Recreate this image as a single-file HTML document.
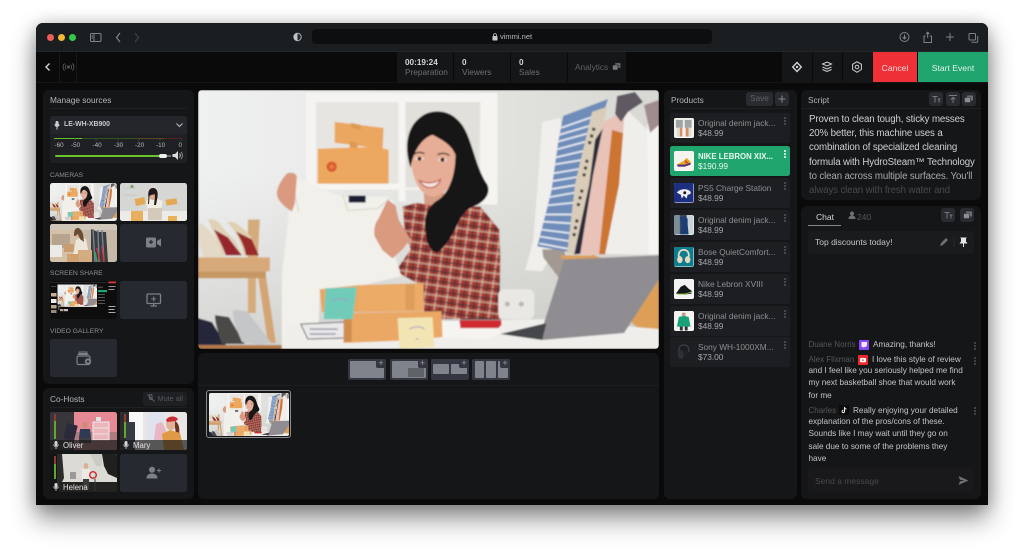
<!DOCTYPE html>
<html><head><meta charset="utf-8">
<style>
html,body{margin:0;padding:0;width:1024px;height:555px;overflow:hidden;background:#fff;font-family:"Liberation Sans",sans-serif}
#wrap{position:absolute;left:0;top:0;width:1024px;height:555px;overflow:hidden;filter:blur(.35px)}
.a,.t{position:absolute}
.t{white-space:nowrap;line-height:12px}
.win{position:absolute;left:36px;top:23px;width:952px;height:482px;background:#0a0a0b;border-radius:7px 7px 0 0;box-shadow:0 14px 26px rgba(0,0,0,.42),0 2px 18px rgba(0,0,0,.25)}
.p{position:absolute;background:#151618;border-radius:6px}
.tile{position:absolute;width:67px;height:38px;border-radius:2.5px;background:#272930;overflow:hidden}
.tile svg{position:absolute;left:0;top:0;width:100%;height:100%}
.lb{position:absolute;font-size:6.7px;color:#8f9194;line-height:10px;white-space:nowrap}
.btn{position:absolute;background:#292b30;border-radius:3px;width:14px;height:14px}
.row{position:absolute;left:670px;width:120px;height:30px;background:#1d1e21;border-radius:2.5px}
.row .th{position:absolute;left:4px;top:5px;width:19.5px;height:19.5px;border-radius:2px;overflow:hidden;background:#fff}
.row .th svg{display:block;width:100%;height:100%}
.row .n{position:absolute;left:28px;top:4.5px;font-size:8.3px;line-height:11px;color:#8d8f92;white-space:nowrap}
.row .pr{position:absolute;left:28px;top:14.5px;font-size:8.3px;line-height:11px;color:#a3a5a8;white-space:nowrap}
.row .d{position:absolute;left:114px;top:4px;width:2px;height:2px;background:#55575b;box-shadow:0 3px 0 #55575b,0 6px 0 #55575b;border-radius:50%}
.cell{position:absolute;top:52px;height:30px;background:#151617}
.v{position:absolute;left:8px;top:5px;font-size:8.2px;font-weight:bold;color:#d4d5d6;line-height:11px}
.s{position:absolute;left:8px;top:15px;font-size:8.3px;color:#6d6f72;line-height:11px;white-space:nowrap}
.sc{position:absolute;left:809px;font-size:9.7px;letter-spacing:-.12px;line-height:14px;color:#cfd0d1;white-space:nowrap}
.c{position:absolute;left:808.5px;font-size:8.2px;line-height:12px;color:#c4c5c6;white-space:nowrap}
.nm{color:#55575a;font-size:8px}
.dots{position:absolute;left:974px;width:2px;height:2px;background:#4f5157;box-shadow:0 3px 0 #4f5157,0 6px 0 #4f5157;border-radius:50%}
.lay{position:absolute;top:359px;height:21px;width:38px;background:#343741;border-radius:2px}
.in{position:absolute;background:#7f838c;border-radius:1px}
.pl{position:absolute;top:0;right:0;width:10px;height:9px;background:#343741;border-radius:0 2px 0 2px;color:#9a9da4;font-size:9px;line-height:9px;text-align:center}
.nametag{position:absolute;bottom:0;left:0;right:0;height:10px;background:rgba(25,25,25,.7)}
.h{font-size:8.3px;color:#b4b5b6}
</style></head><body><div id="wrap">

<div class="win"></div>
<!-- title bar -->
<div class="a" style="left:36px;top:23px;width:952px;height:29px;background:#1b1e21;border-radius:7px 7px 0 0;border-bottom:1px solid #23262a;box-sizing:border-box"></div>
<div class="a" style="left:47px;top:34px;width:7px;height:7px;border-radius:50%;background:#f25c58"></div>
<div class="a" style="left:58px;top:34px;width:7px;height:7px;border-radius:50%;background:#f7b731"></div>
<div class="a" style="left:69px;top:34px;width:7px;height:7px;border-radius:50%;background:#35c94a"></div>
<svg class="a" style="left:0;top:0" width="1024" height="90" fill="none" stroke="#7f8387" stroke-width="1">
 <rect x="90.5" y="33.5" width="10.5" height="8" rx="1"/><path d="M94 33.5v8M91.5 36h1.5M91.5 38h1.5"/>
 <path d="M120 33l-3.5 4.5 3.5 4.5" stroke-width="1.2"/><path d="M135 33l3.5 4.5-3.5 4.5" stroke="#3e4145" stroke-width="1.2"/>
 <circle cx="297.5" cy="37" r="3.7" fill="#23262a" stroke="#a8abae"/><path d="M297.5 33.3a3.7 3.7 0 0 0 0 7.4z" fill="#c2c4c6" stroke="none"/>
 <circle cx="904.5" cy="37" r="4.5"/><path d="M904.5 34.5v4M902.8 37l1.7 2 1.7-2"/>
 <path d="M925.5 36h-1.5v6.5h7.5V36H930M927.700 38v-5.500M926 34l1.700-1.800 1.700 1.800"/>
 <path d="M950 33v8M946 37h8"/>
 <rect x="969" y="33.5" width="6.5" height="6.5" rx="1"/><path d="M971.500 42.300h5.500a.7.7 0 0 0 .7-.7v-5.700"/>
 <path d="M708 34.500a2.700 2.700 0 1 0 .8 2" stroke="#a5a7aa"/><path d="M706.500 33.500l2 .5v2" stroke="#a5a7aa" stroke-width=".8"/>
</svg>
<div class="a" style="left:312px;top:29px;width:400px;height:15px;background:#0c0e10;border-radius:4px"></div>
<svg class="a" style="left:492px;top:33px" width="6" height="8"><rect x=".5" y="3" width="5" height="4.500" rx=".6" fill="#c8c9ca"/><path d="M1.600 3V2a1.400 1.400 0 0 1 2.800 0v1" stroke="#c8c9ca" stroke-width=".8" fill="none"/></svg>
<div class="t" style="left:500px;top:31px;font-size:7.5px;color:#b9babb">vimmi.net</div>

<!-- app bar -->
<div class="a" style="left:36px;top:52px;width:952px;height:30px;background:#0a0a0b"></div>
<div class="a" style="left:36px;top:81.500px;width:952px;height:1px;background:#141516"></div>
<div class="a" style="left:59px;top:52px;width:1px;height:30px;background:#161718"></div>
<div class="a" style="left:76px;top:52px;width:1px;height:30px;background:#161718"></div>
<svg class="a" style="left:43px;top:62px" width="10" height="10" fill="none"><path d="M6.500 1.500L3 5l3.500 3.500" stroke="#d5d6d7" stroke-width="1.400"/></svg>
<svg class="a" style="left:62px;top:61px" width="13" height="12" fill="none" stroke="#55575b" stroke-width=".9"><circle cx="6.500" cy="6" r="1" fill="#55575b"/><path d="M4.300 3.800a3 3 0 0 0 0 4.400M8.700 3.800a3 3 0 0 1 0 4.400M2.600 2.400a5 5 0 0 0 0 7.200M10.400 2.400a5 5 0 0 1 0 7.200"/></svg>

<div class="cell" style="left:397px;width:56px"><div class="v">00:19:24</div><div class="s">Preparation</div></div>
<div class="cell" style="left:454px;width:56px"><div class="v">0</div><div class="s">Viewers</div></div>
<div class="cell" style="left:511px;width:56px"><div class="v">0</div><div class="s">Sales</div></div>
<div class="cell" style="left:568px;width:58px"><div class="s" style="top:10px;left:7px;color:#5f6164">Analytics</div>
 <svg class="a" style="left:44px;top:10px" width="9" height="9"><rect x="3" y="1" width="5.500" height="5" rx=".8" fill="#5f6164"/><rect x=".5" y="3" width="5.500" height="5" rx=".8" fill="#77797c" stroke="#151617" stroke-width=".6"/></svg></div>

<div class="cell" style="left:782px;width:30px"></div><div class="cell" style="left:813px;width:29px"></div><div class="cell" style="left:843px;width:29px"></div>
<svg class="a" style="left:790px;top:59px" width="76" height="16" fill="none" stroke="#d0d1d2" stroke-width="1">
 <path d="M7 3.500L11.300 8 7 12.500 2.700 8z" stroke-width="1.400"/><circle cx="7" cy="8" r="1.200" fill="#d0d1d2" stroke="none"/>
 <path d="M37 3l4.500 2L37 7l-4.500-2zM32.500 8L37 10l4.500-2M32.500 10.500L37 12.500l4.500-2"/>
 <path d="M67 2.700l4.400 2.600v5.200L67 13.300l-4.400-2.800V5.300z"/><circle cx="67" cy="8" r="1.800"/>
</svg>
<div class="a" style="left:873px;top:52px;width:44px;height:30px;background:#f03037"></div>
<div class="a" style="left:918px;top:52px;width:70px;height:30px;background:#21a56e"></div>
<div class="t" style="left:873px;top:61.500px;width:44px;text-align:center;font-size:8.600px;color:#f6dadb">Cancel</div>
<div class="t" style="left:918px;top:61.500px;width:70px;text-align:center;font-size:8.600px;color:#dff2ea">Start Event</div>

<!-- left panel -->
<div class="p" style="left:43px;top:90px;width:151px;height:294px"></div>
<div class="t h" style="left:50px;top:94px">Manage sources</div>
<div class="a" style="left:50px;top:108px;width:137px;height:1px;background:#1f2023"></div>
<div class="a" style="left:50px;top:116px;width:137px;height:47px;background:#1e2024;border-radius:3px"></div>
<div class="a" style="left:50px;top:116px;width:137px;height:18px;background:#24262b;border-radius:3px 3px 0 0"></div>
<svg class="a" style="left:53px;top:120px" width="8" height="11"><rect x="2.500" y="1" width="3" height="5.500" rx="1.500" fill="#cfd0d1"/><path d="M1.500 4.500a2.500 2.500 0 0 0 5 0v-.2H1.500zM3.500 7v2.500h1V7z" fill="#cfd0d1"/></svg>
<div class="t" style="left:64px;top:119px;font-size:6.900px;font-weight:bold;color:#c8c9ca">LE-WH-XB900</div>
<svg class="a" style="left:175px;top:122px" width="9" height="6" fill="none"><path d="M1.500 1.500L4.500 4.500 7.500 1.500" stroke="#b9babb" stroke-width="1.100"/></svg>
<div class="a" style="left:54px;top:138px;width:28px;height:1px;background:#63c027"></div>
<div class="a" style="left:82px;top:138px;width:58px;height:1px;background:#34521d"></div>
<div class="a" style="left:140px;top:138px;width:24px;height:1px;background:#5a4a1c"></div>
<div class="a" style="left:164px;top:138px;width:18px;height:1px;background:#572023"></div>
<svg class="a" style="left:54px;top:138px" width="128" height="3"><path d="M0 0v3M21 0v3M42 0v3M64 0v3M85 0v3M106 0v3M128 0v3" stroke="#4d4f52" stroke-width=".6"/></svg>
<div class="t" style="left:54.500px;top:139.500px;font-size:6.300px;color:#b6b7b8">-60</div>
<div class="t" style="left:71px;top:139.500px;font-size:6.300px;color:#b6b7b8">-50</div>
<div class="t" style="left:92.500px;top:139.500px;font-size:6.300px;color:#b6b7b8">-40</div>
<div class="t" style="left:114px;top:139.500px;font-size:6.300px;color:#b6b7b8">-30</div>
<div class="t" style="left:135px;top:139.500px;font-size:6.300px;color:#b6b7b8">-20</div>
<div class="t" style="left:156px;top:139.500px;font-size:6.300px;color:#b6b7b8">-10</div>
<div class="t" style="left:178.500px;top:139.500px;font-size:6.300px;color:#b6b7b8">0</div>
<div class="a" style="left:55px;top:154.500px;width:110px;height:2px;background:#69c42b;border-radius:1px"></div>
<div class="a" style="left:165px;top:154.500px;width:6px;height:2px;background:#6a6c70"></div>
<div class="a" style="left:159px;top:153.500px;width:8px;height:4px;background:#f0f0f0;border-radius:2px"></div>
<svg class="a" style="left:172px;top:150px" width="12" height="11" fill="#dcdcdd"><path d="M.5 4h2.500l3-3v9l-3-3H.5z"/><path d="M7.500 3.500a3 3 0 0 1 0 4" stroke="#dcdcdd" fill="none" stroke-width=".9"/><path d="M9 2a5 5 0 0 1 0 7" stroke="#8e9092" fill="none" stroke-width=".9"/></svg>

<div class="lb" style="left:50px;top:170.500px">CAMERAS</div>
<div class="tile" style="left:50px;top:183px"><svg viewBox="0 0 462 260" preserveAspectRatio="xMidYMid slice"><use href="#scene"/></svg></div>
<div class="tile" style="left:120px;top:183px"><svg viewBox="0 0 67 38"><rect width="67" height="38" fill="#d6d7d4"/><rect x="0" y="28" width="67" height="10" fill="#ecebe7"/><path d="M3 5h14M3 12h14" stroke="#c2c3bf" stroke-width=".8"/><circle cx="12" cy="3.500" r="1.600" fill="#83a25f"/>
 <rect x="11" y="28" width="12" height="10" fill="#e6b05e"/><rect x="15" y="15" width="10" height="7" fill="#e3a955" transform="rotate(-12 20 18)"/><rect x="46" y="16" width="11" height="6" fill="#e3a955" transform="rotate(-8 51 19)"/>
 <path d="M26 18l6-2 5 0 6 2-3 13H28z" fill="#f1ece4"/><ellipse cx="33" cy="12" rx="4.200" ry="5" fill="#dfa78c"/><path d="M28.500 14c-1-7 2-9 4.500-9s5.500 2 4.500 9l-1.500 8h-2c.5-5 1.500-9 .5-11-2 1-4 .8-5 2l-.5 8h-1z" fill="#23191a"/><rect x="28" y="25" width="14" height="12" fill="#d3cabb"/><rect x="48" y="33" width="9" height="5" fill="#e8b15b"/></svg></div>
<div class="tile" style="left:50px;top:224px"><svg viewBox="0 0 67 38"><rect width="67" height="38" fill="#c6b9a8"/><rect x="0" y="0" width="28" height="38" fill="#d4c1a8"/><rect x="0" y="0" width="67" height="6" fill="#cfc7ba"/><rect x="2" y="10" width="18" height="14" fill="#b7a48e"/><rect x="0" y="21" width="12" height="12" fill="#eceae5"/><rect x="14" y="20" width="10" height="8" fill="#c89b70"/>
 <path d="M41 5l7 3 8 0 2 30H41z" fill="#3f3c3b"/><path d="M43 5l2 33M48 6l1 32M52 6l2 32" stroke="#6d86a0" stroke-width="1.400"/><path d="M47 24l3 14M52 22l2 16" stroke="#c93a4b" stroke-width="1.400"/><path d="M45 28l2 10" stroke="#2fa658" stroke-width="1.600"/>
 <path d="M26 16l5-3 5 2 3 16-2 7H22l2-12z" fill="#ece5d9"/><ellipse cx="27" cy="9" rx="3.200" ry="4" fill="#d9a78a"/><path d="M24 12c0-7 2-8 4-8s4 3 5 6l1 8-4-3-2-5-3 2z" fill="#6a4b33"/><rect x="28" y="26" width="14" height="12" fill="#d3ad81"/><rect x="17" y="30" width="12" height="8" fill="#cfa170"/></svg></div>
<div class="tile" style="left:120px;top:224px"></div>
<svg class="a" style="left:146px;top:236px" width="16" height="14"><rect x="0" y="1.500" width="10" height="10" rx="1.500" fill="#7d8086"/><path d="M11 5l4-2.500v8L11 8z" fill="#7d8086"/><path d="M5 4v4M3 6h4" stroke="#272930" stroke-width="1.200"/></svg>

<div class="lb" style="left:50px;top:269px">SCREEN SHARE</div>
<div class="tile" style="left:50px;top:281px;background:#0d0d0e"><svg viewBox="0 0 67 38"><rect width="67" height="38" fill="#0d0d0e"/><g transform="translate(7.500 3.500) scale(.0855)"><use href="#scene"/></g>
 <rect x="0" y="1" width="60" height=".8" fill="#2a2b2d"/><rect x="58.500" y=".5" width="7.500" height="1.800" fill="#e5343a"/><rect x="1" y="5" width="5" height=".8" fill="#555"/>
 <rect x="1" y="12" width="5.500" height="3.500" fill="#c9b090"/><rect x="1" y="18" width="5.500" height="4" fill="#ececec"/><rect x="1" y="24" width="5.500" height="3.500" fill="#b9a48c"/><rect x="1" y="29" width="5.500" height="3" fill="#9a8a82"/>
 <rect x="48" y="9" width="9" height="2.200" fill="#21a56e"/><rect x="48" y="5.500" width="5" height="1.600" fill="#444"/><rect x="48" y="13" width="7" height="1" fill="#555"/><rect x="48" y="16" width="7" height="1" fill="#555"/><rect x="48" y="19" width="7" height="1" fill="#555"/><rect x="48" y="22" width="7" height="1" fill="#555"/>
 <rect x="58.500" y="5" width="7" height="1" fill="#999"/><rect x="58.500" y="8" width="6" height="1" fill="#999"/><rect x="58.500" y="25" width="7" height="1" fill="#aaa"/><rect x="58.500" y="28" width="6" height="1" fill="#aaa"/><rect x="58.500" y="31" width="7" height="1" fill="#aaa"/>
 <rect x="10" y="28" width="3.500" height="2.200" fill="#b9a48c"/><rect x="8" y="26" width="1.500" height="3" fill="#555"/><rect x="14" y="28" width="4" height="2.200" fill="#cbb"/></svg></div>
<div class="tile" style="left:120px;top:281px"></div>
<svg class="a" style="left:146px;top:293px" width="16" height="15" fill="none" stroke="#7d8086"><rect x="1" y="1" width="13.500" height="9.500" rx="1" stroke-width="1.300"/><path d="M7.700 3.500v5M5.200 6h5" stroke-width="1.100"/><path d="M4.500 13h6.500M7.700 10.500V13" stroke-width="1.300"/></svg>

<div class="lb" style="left:50px;top:327px">VIDEO GALLERY</div>
<div class="tile" style="left:50px;top:339px"></div>
<svg class="a" style="left:76px;top:351px" width="16" height="15"><path d="M3 1h8v1.500H3zM1.500 3.500h11" stroke="#7d8086" fill="none"/><rect x="1" y="5" width="13" height="8.500" rx="1.500" fill="none" stroke="#7d8086" stroke-width="1.200"/><circle cx="12" cy="10.500" r="3.200" fill="#7d8086"/><path d="M12 9v3M10.500 10.500h3" stroke="#272930" stroke-width=".9"/></svg>

<!-- co-hosts -->
<div class="p" style="left:43px;top:388px;width:151px;height:111px"></div>
<div class="t h" style="left:50px;top:393px">Co-Hosts</div>
<div class="a" style="left:143px;top:391.500px;width:44px;height:14px;background:#1f2023;border-radius:3px"></div>
<svg class="a" style="left:146px;top:393px" width="10" height="10" fill="none" stroke="#5f6165"><rect x="3.500" y="1.500" width="2.500" height="5" rx="1.200"/><path d="M1.500 1.500l7 7"/></svg>
<div class="t" style="left:157.500px;top:393px;font-size:7.300px;color:#55575a">Mute all</div>
<div class="a" style="left:50px;top:407px;width:137px;height:1px;background:#1f2023"></div>

<div class="tile" style="left:50px;top:412px;background:#222"><svg viewBox="0 0 67 38"><rect width="67" height="38" fill="#e58a95"/><rect x="0" width="24" height="38" fill="#38363a"/><rect x="24" y="20" width="43" height="18" fill="#b07b7e"/><rect x="43" y="10" width="16" height="18" fill="#eab5bb" stroke="#eee" stroke-width="1"/><rect x="46" y="5" width="5" height="4" fill="#e4e2e4"/><path d="M44 16h14M44 22h14" stroke="#f2f2f2" stroke-width=".8"/><rect x="15" y="12" width="11" height="16" fill="#2b2a3b" transform="rotate(14 20 20)"/><ellipse cx="35" cy="13" rx="2.500" ry="3.200" fill="#c98e70"/><path d="M30 17h10l1 9H29z" fill="#313a55"/><path d="M29 26h12v5H29z" fill="#3f3f48"/></svg>
 <div class="nametag"></div><div class="a" style="left:3.500px;top:2px;width:2px;height:17px;background:#8e3b32"></div><div class="a" style="left:3.500px;top:9px;width:2px;height:18px;background:#62a82c"></div>
 <svg class="a" style="left:3px;top:29px;width:6px;height:9px"><rect x="1.500" y="0" width="3" height="5" rx="1.500" fill="#d8d8d8"/><path d="M.7 3.500a2.300 2.300 0 0 0 4.600 0M3 6v2" stroke="#d8d8d8" fill="none" stroke-width=".8"/></svg>
 <div class="t" style="left:13px;top:27.500px;font-size:7.800px;color:#e4e4e4;line-height:11px">Oliver</div></div>
<div class="tile" style="left:120px;top:412px;background:#222"><svg viewBox="0 0 67 38"><rect width="67" height="38" fill="#e9e5e4"/><rect x="0" width="9" height="38" fill="#2b2b2e"/><rect x="9" y="0" width="14" height="30" fill="#f8f8f8"/><rect x="6" y="10" width="9" height="28" fill="#353a45"/><rect x="27" y="0" width="18" height="30" fill="#dfe3ee"/><path d="M36 12l6-2 4 8-2 10H34z" fill="#e8b7c3"/><ellipse cx="51" cy="12" rx="5" ry="6" fill="#e3b197"/><path d="M46 8c2-4 9-5 12-1l-2 2-9 1z" fill="#cb2b34"/><path d="M55 9c4 2 5 8 4 14l-3-1-1-7z" fill="#6b3420"/><path d="M42 22l8-4 10 3 4 17H44z" fill="#e09a45"/></svg>
 <div class="nametag"></div><div class="a" style="left:3.500px;top:2px;width:2px;height:10px;background:#8e3b32"></div><div class="a" style="left:3.500px;top:10px;width:2px;height:16px;background:#62a82c"></div>
 <svg class="a" style="left:3px;top:29px;width:6px;height:9px"><rect x="1.500" y="0" width="3" height="5" rx="1.500" fill="#d8d8d8"/><path d="M.7 3.500a2.300 2.300 0 0 0 4.600 0M3 6v2" stroke="#d8d8d8" fill="none" stroke-width=".8"/></svg>
 <div class="t" style="left:13px;top:27.500px;font-size:7.800px;color:#e4e4e4;line-height:11px">Mary</div></div>
<div class="tile" style="left:50px;top:454px;background:#111"><svg viewBox="0 0 67 38"><rect width="67" height="38" fill="#141414"/><rect x="9" y="0" width="58" height="28" fill="#dcdad4"/><path d="M12 0l2 24-4 8h-3V0z" fill="#2b2b2a"/><path d="M52 0h15v24l-9-4-4-8z" fill="#20201f"/><path d="M40 0h12v12H46z" fill="#cbcac5"/><rect x="9" y="28" width="58" height="10" fill="#232221"/><ellipse cx="36" cy="12" rx="2.400" ry="3" fill="#dcb092"/><path d="M32 15h8l1 10h-9z" fill="#ece9e2"/><path d="M33 25h6v10h-6z" fill="#3b3a3a"/><circle cx="43" cy="21" r="3.300" fill="none" stroke="#c8333b" stroke-width="1.500"/><rect x="20" y="18" width="6" height="7" fill="#999"/><path d="M45 25v12" stroke="#333"/></svg>
 <div class="a" style="left:3.500px;top:2px;width:2px;height:8px;background:#8e3b32"></div><div class="a" style="left:3.500px;top:10px;width:2px;height:15px;background:#62a82c"></div>
 <svg class="a" style="left:3px;top:29px;width:6px;height:9px"><rect x="1.500" y="0" width="3" height="5" rx="1.500" fill="#d8d8d8"/><path d="M.7 3.500a2.300 2.300 0 0 0 4.600 0M3 6v2" stroke="#d8d8d8" fill="none" stroke-width=".8"/></svg>
 <div class="t" style="left:13px;top:27.500px;font-size:7.800px;color:#e4e4e4;line-height:11px">Helena</div></div>
<div class="tile" style="left:120px;top:454px"></div>
<svg class="a" style="left:146px;top:466px" width="16" height="13" fill="#7d8086"><circle cx="6" cy="3.800" r="3"/><path d="M.5 12.500c0-3.500 2.500-5 5.500-5s5.500 1.500 5.500 5z"/><path d="M13 2.500v4M11 4.500h4" stroke="#7d8086" stroke-width="1" fill="none"/></svg>

<!-- main video -->
<svg class="a" style="left:198px;top:90px;border-radius:4px" width="461" height="259" viewBox="0 0 462 260" preserveAspectRatio="none">
 <defs>
  <filter id="bl" x="-2%" y="-2%" width="104%" height="104%"><feGaussianBlur stdDeviation=".9"/></filter>
  <linearGradient id="wall" x1="0" x2="1" y1="0" y2="0"><stop offset="0" stop-color="#eff1f1"/><stop offset=".5" stop-color="#e6e6e3"/><stop offset="1" stop-color="#d8d8d3"/></linearGradient>
  <linearGradient id="wallb" x1="0" x2="0" y1="0" y2="1"><stop offset=".3" stop-color="#d0d0cc" stop-opacity="0"/><stop offset="1" stop-color="#c4c4be" stop-opacity=".65"/></linearGradient>
  <pattern id="plaid" width="11" height="10" patternUnits="userSpaceOnUse" patternTransform="rotate(8)">
   <rect width="11" height="10" fill="#a53a30"/>
   <rect x="0" width="2" height="10" fill="#d9c9b2" opacity=".6"/><rect x="6" width="1.500" height="10" fill="#2e2a38" opacity=".6"/>
   <rect y="0" width="11" height="2" fill="#d9c9b2" opacity=".6"/><rect y="6" width="11" height="1.500" fill="#2e2a38" opacity=".55"/>
  </pattern>
 </defs>
 <g id="scene" filter="url(#bl)">
  <rect width="462" height="260" fill="url(#wall)"/><rect width="462" height="260" fill="url(#wallb)"/>
  <!-- shelf -->
  <rect x="118" y="12" width="165" height="88" fill="#e7e5e1"/>
  <path d="M108 3h192v112h-17V12H118v85h-10z" fill="#f5f4f2"/><rect x="201" y="12" width="7" height="100" fill="#f6f5f3"/><rect x="118" y="94" width="165" height="6" fill="#f6f5f2"/>
  <path d="M208 12h75v4l-4 82h-71z" fill="#e2e0da"/>
  <rect x="283" y="12" width="17" height="103" fill="#f5f4f1"/>
  <path d="M137 32l49 6-1 21-48-6z" fill="#eba65e"/><path d="M153 33l10 2 0 5-9-2zM152 52l8 1v6l-8-1z" fill="#dd9a53"/>
  <path d="M120 59l58-2 13 3v34h-71z" fill="#eda85e"/><circle cx="134" cy="77" r="5.200" fill="#d9552f"/><circle cx="134" cy="77" r="2.600" fill="#e77b43"/>
  <!-- left rack -->
  <path d="M50 130h12l-2 38H50zM50 186h8v38h-8z" fill="#d6ab7c"/><path d="M60 186h8l10 68h-8z" fill="#d3a575"/>
  <path d="M0 168h72v14H0z" fill="#d7a878"/><rect x="0" y="182" width="68" height="7" fill="#c79763"/>
  <path d="M2 133c6 3 14 14 20 22l4 13H6c-4-8-8-24-4-35z" fill="#e4d9c6"/><path d="M10 130c8-2 13 5 18 12l10 10 6 14H24c-3-12-9-23-14-36z" fill="#e0d2b8"/><path d="M16 140l14 8 14 18H28c-3-8-8-18-12-26z" fill="#96282e"/>
  <path d="M29 133c8-3 16 6 24 14l8 19H46c-2-10-8-26-17-33z" fill="#e0cfb0"/><path d="M38 142l16 8 7 16H48c-1-8-6-18-10-24z" fill="#982c29"/>
  <path d="M0 229l14 4 14 23H0z" fill="#27283a"/><path d="M17 226l14 2 16 27H24c-3-10-7-20-7-29z" fill="#4b4a46"/><path d="M35 221l14 1 24 31-9 3-20-3c-4-10-9-20-9-32z" fill="#c5c6c8"/>
  <rect x="0" y="256" width="84" height="4" fill="#b0794b"/>
  <!-- clothes -->
  <path d="M345 32l18-4 3 28-12 110-9 16-17-1 8-30 7-90z" fill="#f0efec"/>
  <path d="M345 160h22l4 25-6 8-19-25z" fill="#a29993"/>
  <path d="M366 26l45-17-18 55-13 100-40-7 14-55 7-50z" fill="#6f8dba"/>
  <path d="M364 38l40-14M362 45l34-10M360 52l33-9M358 60l30-8M357 68l30-7M356 75l30-5M354 84l30-5M352 92l30-5M351 100l30-5M350 108l28-5M348 116l30-3M346 125l30 0M344 132l32 2M343 140l32 4M342 147l32 5M342 154l32 6" stroke="#e8ecf2" stroke-width="1.700" fill="none"/>
  <path d="M395 22l15-5-12 60-12 88-16-1 8-70z" fill="#d9cdb9"/><path d="M397 38l-6 20M390 70l-4 20M385 100l-5 20M380 130l-4 20" stroke="#3a2d29" stroke-width="3" stroke-dasharray="3 4"/>
  <path d="M398 50l8-12-8 70-8 56-13 1 15-70z" fill="#2a2c3a"/>
  <path d="M407 32l27-16-14 60-16 89h-21l13-80z" fill="#e9c2b8"/>
  <path d="M415 40l-13 125h24l6-120z" fill="#cc7531"/>
  <path d="M428 18l24 24 2 123H408l14-70z" fill="#f0eeeb"/>
  <path d="M450 35l12-20v150h-10z" fill="#f5f4f2"/><path d="M447 15l15-5v25l-9 8z" fill="#a08c8f"/><path d="M420 6l18-4 8 10-15 10-7 10-6-8z" fill="#5f5a62"/>
  <!-- person -->
  <path d="M226 100l24 4 8 22-30 4z" fill="#d49d83"/>
  <path d="M205 117l15-4 23 5 40-1 19 23 1 27-1 63H227l-2-33-27-15 15-22-6-20z" fill="url(#plaid)"/>
  <path d="M93 85l45 20 13 3 30-1 13 1 6 14-6 35 10 30-44 10-38 3-1 35-37 25V187l8-74z" fill="#f2f0ea"/>
  <path d="M93 85l8 38M145 105l5 16 30-2 14-11" stroke="#dad6cc" stroke-width="1.200" fill="none"/><rect x="151" y="106" width="17" height="7" fill="#1a1d33"/>
  <path d="M89 84c4-2 10-1 10 4l-2 26-3 8c-8-5-15-12-15-18 0-7 6-16 10-20z" fill="#d99a80"/>
  <path d="M190 110l8 6 3 14 12 20-8 10-10 9-10-8-8-14c-1-6 0-13 4-18z" fill="#d99a80"/>
  <path d="M213 60C212 85 222 107 235 107 252 106 262 85 262 62 262 42 240 36 225 42z" fill="#e6ae96"/>
  <path d="M213 78C207 60 207 35 228 24 245 17 262 25 270 45 277 62 280 80 290 95 294 105 286 113 276 117 264 122 262 132 256 143 250 153 245 160 240 163 232 163 228 150 228 140 226 128 230 118 238 112 252 105 258 85 258 65 254 55 245 50 235 45 225 48 216 60 213 78z" fill="#171213"/>
  <ellipse cx="222" cy="69" rx="4.500" ry="2" fill="#fff" opacity=".5"/><ellipse cx="245" cy="70" rx="4.500" ry="2" fill="#fff" opacity=".5"/>
  <circle cx="222" cy="69" r="2" fill="#2a1c18"/><circle cx="245" cy="70" r="2" fill="#2a1c18"/><path d="M216 65c3-3 8-3 11-1M240 65c3-2 9-2 12 1" stroke="#33211c" stroke-width="1.200" fill="none"/>
  <path d="M222 91c6 3 14 3 21-1-2 6-6 8-11 8-4 0-8-3-10-7z" fill="#f5e4df" stroke="#ba5d58" stroke-width="1.200"/>
  <!-- laptop & table -->
  <path d="M362 166h33v-1l67 25v50h-20z" fill="#dd9f58"/>
  <rect x="301" y="200" width="36" height="30" rx="6" fill="#eae8e4"/><circle cx="310" cy="215" r="2.500" fill="#b9b6b1"/><circle cx="324" cy="215" r="2.500" fill="#b9b6b1"/>
  <path d="M90 235l258-5 114 10v20H84z" fill="#f0eeea"/>
  <path d="M367 170l95-4v24l-35 54-82 7 2-18z" fill="#8f8d91"/>
  <path d="M303 245l46-11-4 17z" fill="#45464b"/>
  <path d="M245 232h58l-1 13-12 5-45-1z" fill="#f5f4f1"/><path d="M262 231h42v5l-3 3h-38z" fill="#cf2a33"/><path d="M263 230l40 0" stroke="#2b2a2c" stroke-width="1"/>
  <path d="M103 235l44-2 0 16-37 1z" fill="#e9e9e9" stroke="#4a4a4e" stroke-width=".9"/><path d="M112 240h28M112 245h26" stroke="#9999a8" stroke-width="1.500"/>
  <!-- boxes -->
  <path d="M122 200l38-4 66-2v28l-58 1h-44z" fill="#e8a764"/><path d="M160 197l66-3v28h-66z" fill="#ecab66"/><path d="M208 195l9 0v26h-9z" fill="#dd9d5c"/>
  <path d="M146 224l98-2 1 26-26 3-73 3z" fill="#eba865"/><path d="M146 224h8v29h-8z" fill="#cf8d50"/>
  <path d="M128 199l31-1-4 32-29 0z" fill="#6fccb9"/><path d="M200 229l35-1 2 30-35 2z" fill="#f2e5b3"/>
  <path d="M134 212c4-3 14-3 17 0M142 222h3M212 240c4-3 12-3 15 0M218 250h3" stroke="#a197c9" stroke-width="1" fill="none"/>
 </g>
</svg>

<!-- timeline -->
<div class="p" style="left:198px;top:353px;width:461px;height:146px"></div>
<div class="a" style="left:198px;top:385px;width:461px;height:1px;background:#1d1e21"></div>
<div class="lay" style="left:348px"><div class="in" style="left:2px;top:2px;width:34px;height:17px"></div><div class="pl">+</div></div>
<div class="lay" style="left:389.500px"><div class="in" style="left:2px;top:2px;width:34px;height:17px"></div><div class="in" style="left:18px;top:9px;width:16px;height:9px;background:#5e6166"></div><div class="pl">+</div></div>
<div class="lay" style="left:431px"><div class="in" style="left:2px;top:5px;width:16px;height:10px"></div><div class="in" style="left:20px;top:5px;width:16px;height:10px"></div><div class="pl">+</div></div>
<div class="lay" style="left:472px"><div class="in" style="left:2.500px;top:2px;width:9.500px;height:17px"></div><div class="in" style="left:14px;top:2px;width:10px;height:17px"></div><div class="in" style="left:26px;top:2px;width:10px;height:17px"></div><div class="pl">+</div></div>
<div class="a" style="left:206px;top:390px;width:85px;height:48px;border:1.500px solid #8a8c90;border-radius:3px;box-sizing:border-box;background:#151618"></div>
<svg class="a" style="left:208.500px;top:392.500px;border-radius:2px" width="80" height="43" viewBox="0 0 462 260" preserveAspectRatio="xMidYMid slice"><use href="#scene"/></svg>

<!-- products -->
<div class="p" style="left:664px;top:90px;width:133px;height:409px"></div>
<div class="t h" style="left:671px;top:94px">Products</div>
<div class="a" style="left:670px;top:108px;width:120px;height:1px;background:#1f2023"></div>
<div class="btn" style="left:746px;top:92px;width:27px"></div><div class="t" style="left:746px;top:93px;width:27px;text-align:center;font-size:8.200px;color:#5f6165">Save</div>
<div class="btn" style="left:775px;top:92px"></div><svg class="a" style="left:775px;top:92px" width="14" height="14"><path d="M7 3.500v7M3.500 7h7" stroke="#7e8085" stroke-width="1.100"/></svg>

<div class="row" style="top:113px"><div class="th"><svg viewBox="0 0 20 20"><rect width="20" height="20" fill="#f1efec"/><rect x="2" y="2" width="7" height="8" fill="#9ea3a4"/><rect x="11" y="2" width="7" height="8" fill="#9ea3a4"/><rect x="3" y="10" width="3" height="9" fill="#e0dcd6"/><rect x="6" y="10" width="2.500" height="9" fill="#d98c66"/><rect x="12" y="10" width="3" height="9" fill="#d98c66"/><rect x="15" y="10" width="2.500" height="9" fill="#e0dcd6"/></svg></div><div class="n">Original denim jack...</div><div class="pr">$48.99</div><div class="d"></div></div>
<div class="row" style="top:146px;background:#21a56e;height:29.500px"><div class="th"><svg viewBox="0 0 20 20"><rect width="20" height="20" fill="#f5f3f0"/><path d="M3 14l7-4 3-3 4 4v3l-6 2H4z" fill="#e3a920"/><path d="M3 14l8 0 6-2v2l-6 2H4z" fill="#4f2c80"/><path d="M11 9l4 3-3 1z" fill="#c93f2c"/></svg></div><div class="n" style="color:#e8f7f0;font-weight:bold;font-size:7.800px">NIKE LEBRON XIX...</div><div class="pr" style="color:#e8f7f0">$190.99</div><div class="d" style="background:#fff;box-shadow:0 3px 0 #fff,0 6px 0 #fff"></div></div>
<div class="row" style="top:178px"><div class="th"><svg viewBox="0 0 20 20"><rect width="20" height="20" fill="#1d2f80"/><path d="M3 10c2-4 11-5 14-1 1 2-1 3-3 3l-1 4-3-3-2 3-1-4z" fill="#eceef1"/><circle cx="11" cy="10" r="1.500" fill="#17181c"/></svg></div><div class="n">PS5 Charge Station</div><div class="pr">$48.99</div><div class="d"></div></div>
<div class="row" style="top:210px"><div class="th"><svg viewBox="0 0 20 20"><rect width="20" height="20" fill="#3b4a55"/><rect x="0" width="6" height="20" fill="#7c8e98"/><rect x="13" width="7" height="20" fill="#c9d2d6"/><path d="M6 3l5-2 3 3v6l1 10H7l1-10z" fill="#1c3c78"/></svg></div><div class="n">Original denim jack...</div><div class="pr">$48.99</div><div class="d"></div></div>
<div class="row" style="top:242px"><div class="th"><svg viewBox="0 0 20 20"><rect width="20" height="20" fill="#0e7e8f"/><path d="M5 11c-1-6 2-8 5-8s6 2 5 8" stroke="#e9dac4" stroke-width="1.800" fill="none"/><ellipse cx="6" cy="13" rx="2.800" ry="3.600" fill="#ead9c0"/><ellipse cx="14" cy="13" rx="2.800" ry="3.600" fill="#ead9c0"/></svg></div><div class="n">Bose QuietComfort...</div><div class="pr">$48.99</div><div class="d"></div></div>
<div class="row" style="top:274px"><div class="th"><svg viewBox="0 0 20 20"><rect width="20" height="20" fill="#f4f3f1"/><path d="M2 15l5-7 4-2 4 4 3 2v3l-8 1z" fill="#15181a"/><path d="M3 15l8 0 7-2v1l-8 2H4z" fill="#8ed04a"/></svg></div><div class="n">Nike Lebron XVIII</div><div class="pr">$48.99</div><div class="d"></div></div>
<div class="row" style="top:306px"><div class="th"><svg viewBox="0 0 20 20"><rect width="20" height="20" fill="#f4f3f1"/><circle cx="10" cy="3.500" r="2" fill="#c79c81"/><path d="M5 6l5-1 5 1 2 10H3z" fill="#19a179"/><rect x="6" y="16" width="3" height="4" fill="#333"/><rect x="11" y="16" width="3" height="4" fill="#333"/></svg></div><div class="n">Original denim jack...</div><div class="pr">$48.99</div><div class="d"></div></div>
<div class="row" style="top:337px"><div class="th" style="background:#1d1e21"><svg viewBox="0 0 20 20"><path d="M5 12c-1-7 2-9 5-9s6 2 5 7" stroke="#3a3b3e" stroke-width="1.500" fill="none"/><ellipse cx="7" cy="13" rx="3" ry="4.500" fill="#2f3033"/><ellipse cx="12" cy="12" rx="2" ry="3.500" fill="#202124"/></svg></div><div class="n">Sony WH-1000XM...</div><div class="pr">$73.00</div><div class="d"></div></div>

<!-- script -->
<div class="p" style="left:801px;top:90px;width:180px;height:110px"></div>
<div class="t h" style="left:808px;top:94px">Script</div>
<div class="a" style="left:801px;top:108px;width:180px;height:1px;background:#1f2023"></div>
<div class="btn" style="left:929px;top:92px"></div><div class="btn" style="left:946px;top:92px"></div><div class="btn" style="left:962px;top:92px"></div>
<svg class="a" style="left:929px;top:92px" width="47" height="14" fill="none" stroke="#787a80"><path d="M3.500 4.500h5M6 4.500v6M8.500 7h3M10 7v3.500"/><path d="M20 3.500h8M24 11V6M21.800 7.500L24 5.300 26.200 7.500"/><rect x="38" y="3.500" width="6" height="5" rx=".6" fill="#6d6f75" stroke="none"/><rect x="35.500" y="5.500" width="6" height="5" rx=".6" fill="#8b8d92" stroke="#292b30" stroke-width=".6"/></svg>
<div class="sc" style="top:113px">Proven to clean tough, sticky messes</div>
<div class="sc" style="top:127px">20% better, this machine uses a</div>
<div class="sc" style="top:141px">combination of specialized cleaning</div>
<div class="sc" style="top:155.500px">formula with HydroSteam™ Technology</div>
<div class="sc" style="top:169.500px;color:#a8a9aa">to clean across multiple surfaces. You'll</div>
<div class="sc" style="top:183.500px;color:#48494b">always clean with fresh water and</div>

<!-- chat -->
<div class="p" style="left:801px;top:206px;width:180px;height:293px"></div>
<div class="t" style="left:816px;top:210.500px;font-size:8.500px;color:#d6d7d8">Chat</div>
<div class="a" style="left:808px;top:224.500px;width:33px;height:1px;background:#85878a"></div>
<svg class="a" style="left:848px;top:211px" width="8" height="9" fill="#6d6f73"><circle cx="4" cy="2.500" r="2"/><path d="M.5 8c0-2.500 1.500-3.500 3.500-3.500S7.500 5.500 7.500 8z"/></svg>
<div class="t" style="left:857px;top:210.500px;font-size:8.500px;color:#55575a">240</div>
<div class="btn" style="left:941px;top:208px"></div><div class="btn" style="left:960px;top:208px"></div>
<svg class="a" style="left:941px;top:208px" width="33" height="14" fill="none" stroke="#787a80"><path d="M3.500 4.500h5M6 4.500v6M8.500 7h3M10 7v3.500"/><rect x="25" y="3.500" width="6" height="5" rx=".6" fill="#6d6f75" stroke="none"/><rect x="22.500" y="5.500" width="6" height="5" rx=".6" fill="#8b8d92" stroke="#292b30" stroke-width=".6"/></svg>
<div class="a" style="left:808px;top:231px;width:166px;height:22.500px;background:#1a1b1d;border-radius:3px"></div>
<div class="t" style="left:815px;top:236px;font-size:8.500px;color:#c3c4c5">Top discounts today!</div>
<svg class="a" style="left:938px;top:236px" width="32" height="12"><path d="M2 10l1-3 5-5 2 2-5 5z" fill="#6d6f73"/><path d="M16 1v10" stroke="#28292b"/><path d="M22 1.500h7l-1 1v3l1.500 2h-8l1.500-2v-3zM25 7.500h1v3.500h-1z" fill="#e4e4e5"/></svg>

<div class="c" style="top:339px"><span class="nm">Duane Norris</span></div>
<svg class="a" style="left:859px;top:340px" width="10" height="10"><rect width="10" height="10" rx="1" fill="#8a46f0"/><path d="M2.500 2h5.500v3.500l-1.500 1.500h-1l-1 1v-1h-2z" fill="#f0e8fd"/></svg>
<div class="c" style="left:873px;top:339px">Amazing, thanks!</div>
<div class="dots" style="top:342px"></div>
<div class="c" style="top:354px"><span class="nm">Alex Flixman</span></div>
<svg class="a" style="left:858px;top:355px" width="10" height="10"><rect width="10" height="10" rx="1" fill="#ee2a2e"/><rect x="2" y="3" width="6" height="4.200" rx="1" fill="#fff"/><path d="M4.300 4l2 1.100-2 1.100z" fill="#ee2a2e"/></svg>
<div class="c" style="left:872px;top:354px">I love this style of review</div>
<div class="dots" style="top:357px"></div>
<div class="c" style="top:365px">and I feel like you seriously helped me find</div>
<div class="c" style="top:377px">my next basketball shoe that would work</div>
<div class="c" style="top:389.500px">for me</div>
<div class="c" style="top:404.500px"><span class="nm">Charles</span></div>
<svg class="a" style="left:839px;top:405px" width="10" height="10"><rect width="10" height="10" rx="1" fill="#0b0b0b"/><path d="M5.500 2v4.500a1.200 1.200 0 1 1-1-1.200M5.500 2.500c.3 1 1 1.500 2 1.600" stroke="#eee" fill="none"/></svg>
<div class="c" style="left:853px;top:404.500px">Really enjoying your detailed</div>
<div class="dots" style="top:407px"></div>
<div class="c" style="top:416px">explanation of the pros/cons of these.</div>
<div class="c" style="top:428px">Sounds like I may wait until they go on</div>
<div class="c" style="top:440.500px">sale due to some of the problems they</div>
<div class="c" style="top:453px">have</div>
<div class="a" style="left:808px;top:468px;width:166px;height:24px;background:#19191b;border-radius:3px"></div>
<div class="t" style="left:815px;top:475px;font-size:8.500px;color:#47494c">Send a message</div>
<svg class="a" style="left:958px;top:475px" width="11" height="11"><path d="M.5 1l10 4.500L.5 10l1.500-3.700 4.500-.8-4.500-.8z" fill="#6d6f73"/></svg>

</div></body></html>
